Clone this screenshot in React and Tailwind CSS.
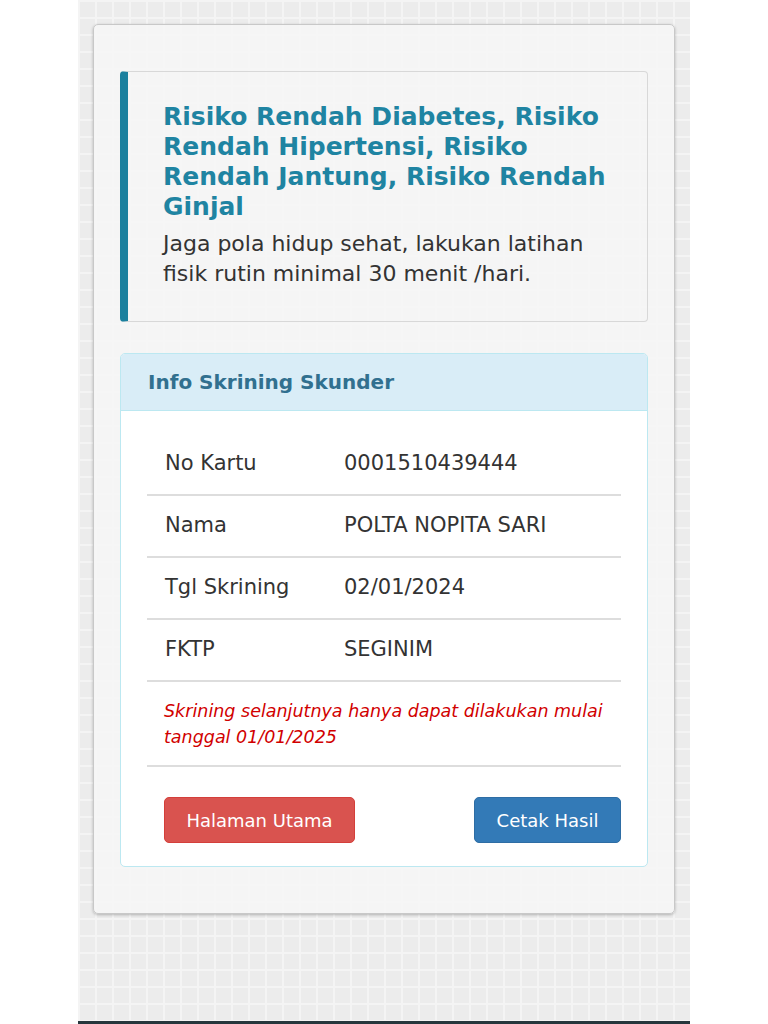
export default function App() {
  const rows = [
    { label: 'No Kartu', value: '0001510439444' },
    { label: 'Nama', value: 'POLTA NOPITA SARI' },
    { label: 'Tgl Skrining', value: '02/01/2024' },
    { label: 'FKTP', value: 'SEGINIM' },
  ]

  return (
    <div className="min-h-[1024px] w-full bg-white font-['DejaVu_Sans',sans-serif]">
      <div className="mx-auto flex min-h-[1024px] w-[612px] flex-col bg-[#ececec] bg-[linear-gradient(to_right,#f4f4f4_2px,transparent_2px),linear-gradient(to_bottom,#f4f4f4_2px,transparent_2px)] bg-[size:17px_17px]">
        <div className="flex-1 px-[15px] pt-[24px]">
          <div className="rounded-[5px] border border-[#c8c8c8] bg-[#f6f6f6]/90 px-[26px] pt-[46px] pb-[46px] shadow-[0_1px_3px_rgba(0,0,0,0.25)]">
            {/* callout */}
            <div className="rounded-[4px] border border-l-[8px] border-[#d8d8d8] border-l-[#1b809e] pl-[35px] pr-[30px] pt-[30px] pb-[32px]">
              <h4 className="text-[25px] leading-[30px] font-bold text-[#1f84a2]">
                Risiko Rendah Diabetes, Risiko Rendah Hipertensi, Risiko Rendah Jantung, Risiko Rendah Ginjal
              </h4>
              <p className="mt-[7px] text-[22px] leading-[30px] text-[#333]">
                Jaga pola hidup sehat, lakukan latihan fisik rutin minimal 30 menit /hari.
              </p>
            </div>

            {/* panel */}
            <div className="mt-[31px] overflow-hidden rounded-[5px] border border-[#bce8f1] bg-white">
              <div className="flex h-[57px] items-center border-b border-[#bce8f1] bg-[#d9edf7] px-[27px]">
                <h3 className="text-[20px] font-bold text-[#31708f]">Info Skrining Skunder</h3>
              </div>
              <div className="px-[26px] pt-[23px] pb-[23px]">
                <div>
                  {rows.map((r) => (
                    <div key={r.label} className="flex h-[62px] items-center border-b-2 border-[#dddddd] text-[21px] text-[#333]">
                      <div className="w-[197px] pl-[18px]">{r.label}</div>
                      <div>{r.value}</div>
                    </div>
                  ))}
                  <div className="border-b-2 border-[#dddddd] pl-[17px] pt-[16px] pb-[15px]">
                    <p className="text-[17.5px] leading-[26px] italic text-[#d10000]">
                      Skrining selanjutnya hanya dapat dilakukan mulai tanggal 01/01/2025
                    </p>
                  </div>
                </div>
                <div className="mt-[30px] flex items-center justify-between pl-[17px]">
                  <button className="h-[46px] w-[191px] rounded-[5px] border border-[#d43f3a] bg-[#d9534f] text-[18px] text-white">
                    Halaman Utama
                  </button>
                  <button className="h-[46px] w-[147px] rounded-[5px] border border-[#2e6da4] bg-[#337ab7] text-[18px] text-white">
                    Cetak Hasil
                  </button>
                </div>
              </div>
            </div>
          </div>
        </div>
        <div className="h-[3px] w-full bg-[#26373d]" />
      </div>
    </div>
  )
}
